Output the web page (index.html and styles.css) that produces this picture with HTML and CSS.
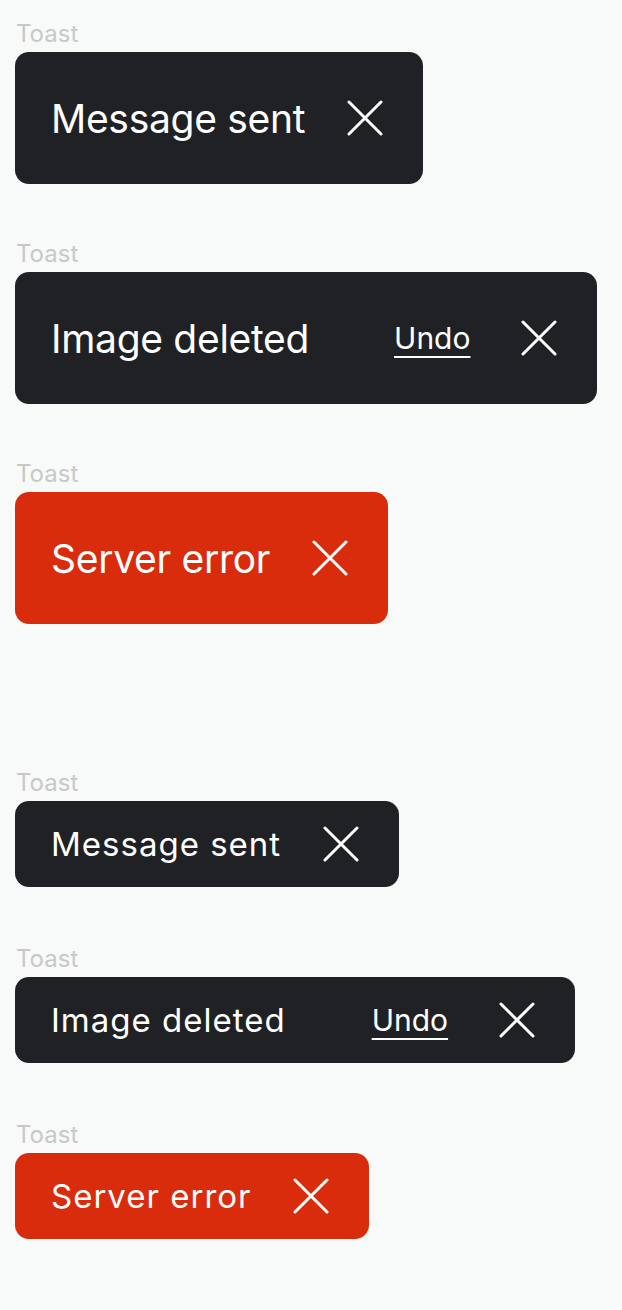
FILE: index.html
```html
<!DOCTYPE html>
<html lang="en">
<head>
<meta charset="utf-8">
<title>Toasts</title>
<link rel="stylesheet" href="styles.css">
</head>
<body>
<main class="page">
  <section class="group group-lg">
    <div class="item">
      <div class="label">Toast</div>
      <div class="toast toast-dark">
        <span class="msg">Message sent</span>
        <span class="close"><svg viewBox="0 0 36 36"><path d="M2 2L34 34M34 2L2 34"/></svg></span>
      </div>
    </div>
    <div class="item">
      <div class="label">Toast</div>
      <div class="toast toast-dark">
        <span class="msg">Image deleted</span>
        <span class="action">Undo</span>
        <span class="close"><svg viewBox="0 0 36 36"><path d="M2 2L34 34M34 2L2 34"/></svg></span>
      </div>
    </div>
    <div class="item">
      <div class="label">Toast</div>
      <div class="toast toast-error">
        <span class="msg">Server error</span>
        <span class="close"><svg viewBox="0 0 36 36"><path d="M2 2L34 34M34 2L2 34"/></svg></span>
      </div>
    </div>
  </section>
  <section class="group group-sm">
    <div class="item">
      <div class="label">Toast</div>
      <div class="toast toast-dark">
        <span class="msg">Message sent</span>
        <span class="close"><svg viewBox="0 0 36 36"><path d="M2 2L34 34M34 2L2 34"/></svg></span>
      </div>
    </div>
    <div class="item">
      <div class="label">Toast</div>
      <div class="toast toast-dark">
        <span class="msg">Image deleted</span>
        <span class="action">Undo</span>
        <span class="close"><svg viewBox="0 0 36 36"><path d="M2 2L34 34M34 2L2 34"/></svg></span>
      </div>
    </div>
    <div class="item">
      <div class="label">Toast</div>
      <div class="toast toast-error">
        <span class="msg">Server error</span>
        <span class="close"><svg viewBox="0 0 36 36"><path d="M2 2L34 34M34 2L2 34"/></svg></span>
      </div>
    </div>
  </section>
</main>
</body>
</html>
```

FILE: styles.css
```css
html, body {
  margin: 0;
  padding: 0;
  background: #f8f9f9;
}

body {
  font-family: Inter, "Noto Sans", "Liberation Sans", sans-serif;
  color: #fff;
}

.page {
  padding: 20px 15px 0 15px;
  display: flex;
  flex-direction: column;
  gap: 145px;
}

.group {
  display: flex;
  flex-direction: column;
  gap: 56px;
}

.group-sm {
  gap: 58px;
}

.item {
  display: flex;
  flex-direction: column;
  align-items: flex-start;
  gap: 4px;
}

.label {
  font-size: 24px;
  line-height: 28px;
  color: #c8c8c8;
  padding-left: 1px;
}

.toast {
  display: flex;
  align-items: center;
  box-sizing: border-box;
  border-radius: 14px;
  padding: 0 40px 0 36px;
}

.group-lg .toast {
  height: 132px;
}

.group-sm .toast {
  height: 86px;
}

.toast-dark {
  background: #202124;
}

.toast-error {
  background: #d92c0d;
}

.msg {
  white-space: nowrap;
}

.group-lg .msg {
  font-size: 39px;
  letter-spacing: -0.3px;
}

.group-sm .msg {
  font-size: 33px;
  letter-spacing: 1px;
}

.action {
  font-size: 30px;
  letter-spacing: 0;
  text-decoration: underline;
  text-decoration-thickness: 2px;
  text-underline-offset: 7px;
  margin-left: 85px;
}

.group-sm .action {
  margin-left: 86px;
}

.close {
  display: flex;
  width: 36px;
  height: 36px;
  margin-left: 42px;
}

.action + .close {
  margin-left: 51px;
}

.close svg {
  width: 36px;
  height: 36px;
  stroke: #fff;
  stroke-width: 3;
  stroke-linecap: round;
  fill: none;
}
```
